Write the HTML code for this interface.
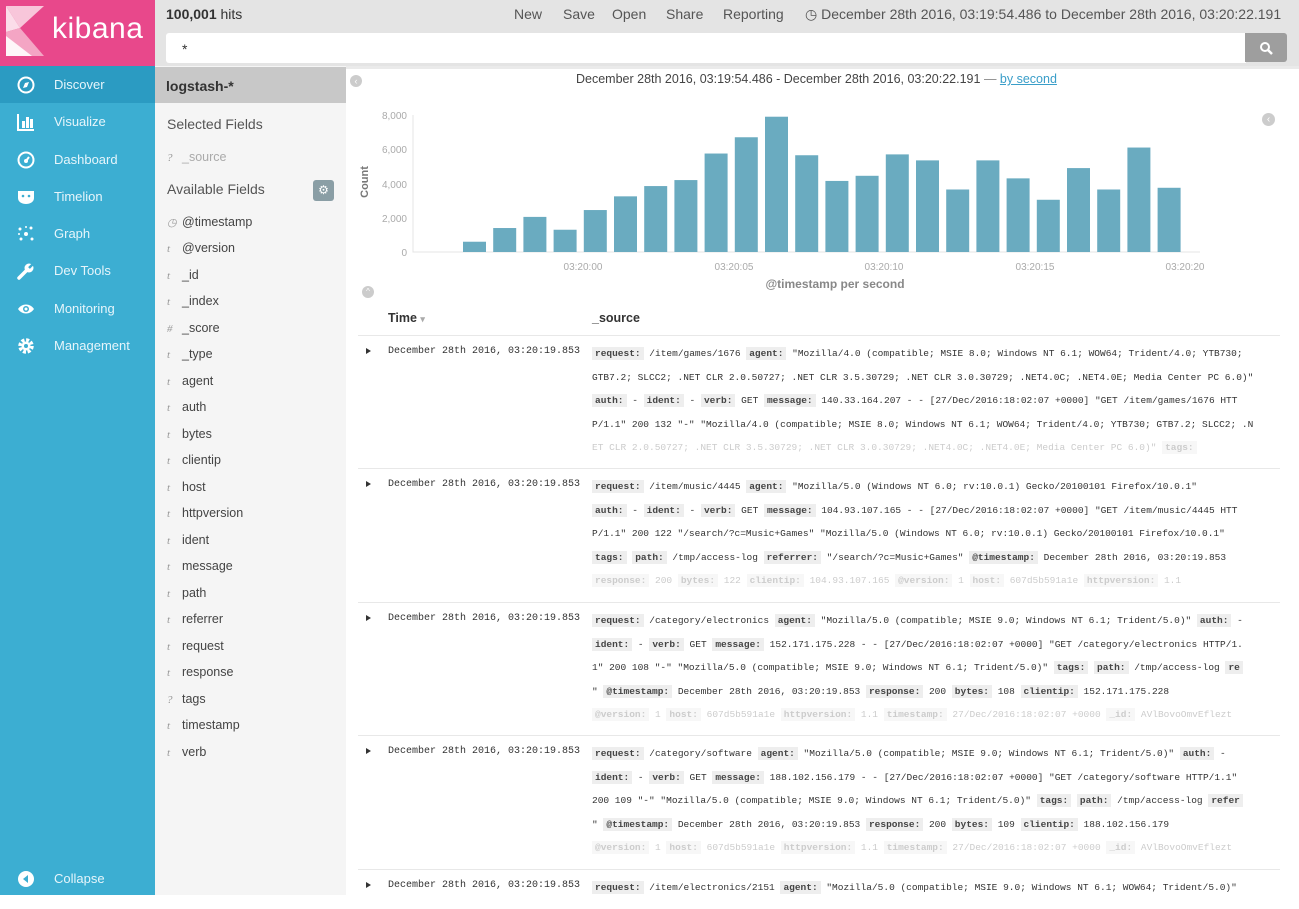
<!DOCTYPE html>
<html><head><meta charset="utf-8"><style>
*{margin:0;padding:0;box-sizing:border-box}
body{width:1299px;height:895px;overflow:hidden;background:#fff;font-family:"Liberation Sans",sans-serif;position:relative;color:#333}
.abs{position:absolute}
#side{left:0;top:0;width:155px;height:895px;background:#3caed2}
#logo{left:0;top:0;width:155px;height:66px;background:#e8488b}
.nav{position:absolute;left:0;width:155px;height:37px;color:#e6f5fb;font-size:13px;line-height:37px;padding-left:54px}
.nav svg{position:absolute;left:17px;top:10px}
#top{left:155px;top:0;width:1144px;height:66px;background:#e4e4e4}
#fields{left:155px;top:66px;width:191px;height:829px;background:#f5f5f5}
.f{position:absolute;left:12px;font-size:12.5px;color:#444}
.f i{font-family:"Liberation Serif",serif;color:#999;font-size:11px;display:inline-block;width:15px}
.row{position:absolute;left:358px;width:922px;border-top:1px solid #e8e8e8}
.ts{position:absolute;left:30px;top:10px;font:10px "Liberation Mono",monospace;color:#333}
.src{position:absolute;left:234px;top:6px;font:9.5px "Liberation Mono",monospace;color:#333;line-height:23.5px;white-space:nowrap}
.src b{background:#eee;padding:1px 3px;font-weight:bold;color:#444}
.src .fade{color:#ccc}
.src .fade b{color:#ccc;background:#f7f7f7}
.arr{position:absolute;left:8px;top:12px;width:0;height:0;border-left:5px solid #333;border-top:3px solid transparent;border-bottom:3px solid transparent}
</style></head><body>
<div id="side" class="abs"></div>
<div id="logo" class="abs">
<svg class="abs" style="left:6px;top:6px" width="40" height="50" viewBox="0 0 40 50"><polygon points="0,0 38,0 14,22" fill="#f8c6da"/><polygon points="0,0 14,22 0,26" fill="#fbdde9"/><polygon points="0,26 14,22 38,50 0,50" fill="#f4a5c4"/><polygon points="0,30 26,50 0,50" fill="#fff" opacity=".9"/></svg>
<div class="abs" style="left:52px;top:12px;font-size:30px;color:#fff;letter-spacing:.5px">kibana</div>
</div>
<div class="nav" style="top:66px;background:#2b9bc2"><svg width="18" height="18" viewBox="0 0 18 18"><circle cx="9" cy="9" r="7.5" fill="none" stroke="#fff" stroke-width="2"/><path d="M6 12l2-5 4-1-2 5z" fill="#fff"/></svg>Discover</div>
<div class="nav" style="top:103px"><svg width="18" height="18" viewBox="0 0 18 18"><path d="M1 1v16h16" fill="none" stroke="#fff" stroke-width="2"/><rect x="5" y="8" width="3" height="7" fill="#fff"/><rect x="9" y="4" width="3" height="11" fill="#fff"/><rect x="13" y="6" width="3" height="9" fill="#fff"/></svg>Visualize</div>
<div class="nav" style="top:141px"><svg width="18" height="18" viewBox="0 0 18 18"><circle cx="9" cy="9" r="7.5" fill="none" stroke="#fff" stroke-width="2"/><circle cx="9" cy="10" r="2" fill="#fff"/><path d="M9 10l3-4" stroke="#fff" stroke-width="2"/></svg>Dashboard</div>
<div class="nav" style="top:178px"><svg width="18" height="18" viewBox="0 0 18 18"><path d="M1 3h16v7c0 4-4 6-8 6s-8-2-8-6z" fill="#fff"/><circle cx="6" cy="8" r="1.3" fill="#3caed2"/><circle cx="12" cy="8" r="1.3" fill="#3caed2"/></svg>Timelion</div>
<div class="nav" style="top:215px"><svg width="18" height="18" viewBox="0 0 18 18" fill="#fff"><circle cx="9" cy="9" r="2"/><circle cx="3" cy="4" r="1.5"/><circle cx="14" cy="3" r="1.5"/><circle cx="4" cy="14" r="1.5"/><circle cx="15" cy="14" r="1.5"/><circle cx="9" cy="2" r="1"/><circle cx="2" cy="9" r="1"/></svg>Graph</div>
<div class="nav" style="top:252px"><svg width="18" height="18" viewBox="0 0 18 18"><path d="M2 16l8-8" stroke="#fff" stroke-width="3.5" stroke-linecap="round"/><circle cx="12" cy="6" r="4.5" fill="#fff"/><path d="M12 6l4-4" stroke="#3caed2" stroke-width="2.5"/></svg>Dev Tools</div>
<div class="nav" style="top:290px"><svg width="18" height="18" viewBox="0 0 18 18"><path d="M1 9c4-6 12-6 16 0c-4 6-12 6-16 0z" fill="#fff"/><circle cx="9" cy="9" r="3" fill="#3caed2"/><circle cx="9" cy="9" r="1.5" fill="#fff"/></svg>Monitoring</div>
<div class="nav" style="top:327px"><svg width="18" height="18" viewBox="0 0 18 18"><circle cx="9" cy="9" r="6" fill="none" stroke="#fff" stroke-width="3.5" stroke-dasharray="3 1.7"/><circle cx="9" cy="9" r="4.5" fill="#fff"/><circle cx="9" cy="9" r="2" fill="#3caed2"/></svg>Management</div>
<div class="nav" style="top:860px"><svg width="18" height="18" viewBox="0 0 18 18"><circle cx="9" cy="9" r="8" fill="#fff"/><path d="M11 5l-5 4 5 4z" fill="#3caed2"/></svg>Collapse</div>

<div id="top" class="abs">
<div class="abs" style="left:11px;top:6px;font-size:14px;color:#333"><b>100,001</b> hits</div>
<div class="abs" style="left:359px;top:6px;font-size:14px;color:#555">New</div>
<div class="abs" style="left:408px;top:6px;font-size:14px;color:#555">Save</div>
<div class="abs" style="left:457px;top:6px;font-size:14px;color:#555">Open</div>
<div class="abs" style="left:511px;top:6px;font-size:14px;color:#555">Share</div>
<div class="abs" style="left:568px;top:6px;font-size:14px;color:#555">Reporting</div>
<div class="abs" style="left:650px;top:6px;font-size:14px;color:#555;white-space:nowrap">◷ December 28th 2016, 03:19:54.486 to December 28th 2016, 03:20:22.191</div>
<div class="abs" style="left:11px;top:33px;width:1080px;height:30px;background:#fff;border-radius:3px 0 0 3px;font-size:14px;padding:8px 16px">*</div>
<div class="abs" style="left:1090px;top:33px;width:42px;height:29px;background:#9e9e9e;border-radius:0 3px 3px 0"><svg class="abs" style="left:14px;top:8px" width="14" height="14" viewBox="0 0 14 14"><circle cx="6" cy="6" r="4" fill="none" stroke="#fff" stroke-width="2"/><path d="M9 9l4 4" stroke="#fff" stroke-width="2.5"/></svg></div>
</div>

<div id="fields" class="abs">
<div class="abs" style="left:0;top:1px;width:191px;height:36px;background:#c8c8c8;font-weight:bold;font-size:14px;padding:11px 11px;color:#333">logstash-*</div>
<div class="f" style="top:50px;font-size:14px;color:#555">Selected Fields</div>
<div class="f" style="top:84px;color:#aaa"><i>?</i>_source</div>
<div class="f" style="top:115px;font-size:14px;color:#555">Available Fields</div>
<div class="abs" style="left:158px;top:114px;width:21px;height:21px;background:#8a9ea5;border-radius:3px;color:#fff;font-size:12px;text-align:center;line-height:21px">⚙</div>
<div class="f" style="top:149px"><i>◷</i>@timestamp</div>
<div class="f" style="top:175px"><i>t</i>@version</div>
<div class="f" style="top:202px"><i>t</i>_id</div>
<div class="f" style="top:228px"><i>t</i>_index</div>
<div class="f" style="top:255px"><i>#</i>_score</div>
<div class="f" style="top:281px"><i>t</i>_type</div>
<div class="f" style="top:308px"><i>t</i>agent</div>
<div class="f" style="top:334px"><i>t</i>auth</div>
<div class="f" style="top:361px"><i>t</i>bytes</div>
<div class="f" style="top:387px"><i>t</i>clientip</div>
<div class="f" style="top:414px"><i>t</i>host</div>
<div class="f" style="top:440px"><i>t</i>httpversion</div>
<div class="f" style="top:467px"><i>t</i>ident</div>
<div class="f" style="top:493px"><i>t</i>message</div>
<div class="f" style="top:520px"><i>t</i>path</div>
<div class="f" style="top:546px"><i>t</i>referrer</div>
<div class="f" style="top:573px"><i>t</i>request</div>
<div class="f" style="top:599px"><i>t</i>response</div>
<div class="f" style="top:626px"><i>?</i>tags</div>
<div class="f" style="top:652px"><i>t</i>timestamp</div>
<div class="f" style="top:679px"><i>t</i>verb</div>
</div>
<div class="abs" style="left:346px;top:66px;width:953px;height:3px;background:#eaeaea"></div>

<div class="abs" style="left:576px;top:72px;font-size:12.5px;color:#444;white-space:nowrap">December 28th 2016, 03:19:54.486 - December 28th 2016, 03:20:22.191 <span style="color:#888">—</span> <span style="color:#3a9ec9;text-decoration:underline">by second</span></div>
<div class="abs" style="left:350px;top:75px;width:12px;height:12px;border-radius:50%;background:#ccc;color:#fff;font-size:9px;line-height:12px;text-align:center">‹</div>
<div class="abs" style="left:1262px;top:113px;width:13px;height:13px;border-radius:50%;background:#ccc;color:#fff;font-size:10px;line-height:13px;text-align:center">‹</div>
<div class="abs" style="left:362px;top:286px;width:12px;height:12px;border-radius:50%;background:#ccc;color:#fff;font-size:8px;line-height:12px;text-align:center">^</div>

<svg class="abs" style="left:346px;top:100px" width="953" height="200" viewBox="346 100 953 200">
<g font-family="Liberation Sans" font-size="10" fill="#aaa" text-anchor="end">
<text x="407" y="119">8,000</text><text x="407" y="153">6,000</text><text x="407" y="188">4,000</text><text x="407" y="222">2,000</text><text x="407" y="256">0</text>
</g>
<text transform="translate(368,182) rotate(-90)" font-family="Liberation Sans" font-size="11" font-weight="bold" fill="#777" text-anchor="middle">Count</text>
<path d="M413 115V252H1200" stroke="#e4e4e4" fill="none"/>
<g fill="#6aabc0" id="bars"></g>
<g font-family="Liberation Sans" font-size="10" fill="#aaa" text-anchor="middle">
<text x="583" y="270">03:20:00</text><text x="734" y="270">03:20:05</text><text x="884" y="270">03:20:10</text><text x="1035" y="270">03:20:15</text><text x="1185" y="270">03:20:20</text>
</g>
<text x="835" y="288" font-family="Liberation Sans" font-size="12" font-weight="bold" fill="#888" text-anchor="middle">@timestamp per second</text>
</svg>

<div class="abs" style="left:388px;top:311px;font-size:12.5px;font-weight:bold;color:#333">Time <span style="color:#aaa;font-size:9px">▾</span></div>
<div class="abs" style="left:592px;top:311px;font-size:12.5px;font-weight:bold;color:#333">_source</div>

<div class="row" style="top:335px;height:134px"><div class="arr"></div><div class="ts">December 28th 2016, 03:20:19.853</div>
<div class="src"><b>request:</b> /item/games/1676 <b>agent:</b> "Mozilla/4.0 (compatible; MSIE 8.0; Windows NT 6.1; WOW64; Trident/4.0; YTB730;<br>GTB7.2; SLCC2; .NET CLR 2.0.50727; .NET CLR 3.5.30729; .NET CLR 3.0.30729; .NET4.0C; .NET4.0E; Media Center PC 6.0)"<br><b>auth:</b> - <b>ident:</b> - <b>verb:</b> GET <b>message:</b> 140.33.164.207 - - [27/Dec/2016:18:02:07 +0000] "GET /item/games/1676 HTT<br>P/1.1" 200 132 "-" "Mozilla/4.0 (compatible; MSIE 8.0; Windows NT 6.1; WOW64; Trident/4.0; YTB730; GTB7.2; SLCC2; .N<br><span class="fade">ET CLR 2.0.50727; .NET CLR 3.5.30729; .NET CLR 3.0.30729; .NET4.0C; .NET4.0E; Media Center PC 6.0)" <b>tags:</b></span></div></div>

<div class="row" style="top:468px;height:134px"><div class="arr"></div><div class="ts">December 28th 2016, 03:20:19.853</div>
<div class="src"><b>request:</b> /item/music/4445 <b>agent:</b> "Mozilla/5.0 (Windows NT 6.0; rv:10.0.1) Gecko/20100101 Firefox/10.0.1"<br><b>auth:</b> - <b>ident:</b> - <b>verb:</b> GET <b>message:</b> 104.93.107.165 - - [27/Dec/2016:18:02:07 +0000] "GET /item/music/4445 HTT<br>P/1.1" 200 122 "/search/?c=Music+Games" "Mozilla/5.0 (Windows NT 6.0; rv:10.0.1) Gecko/20100101 Firefox/10.0.1"<br><b>tags:</b>  <b>path:</b> /tmp/access-log <b>referrer:</b> "/search/?c=Music+Games" <b>@timestamp:</b> December 28th 2016, 03:20:19.853<br><span class="fade"><b>response:</b> 200 <b>bytes:</b> 122 <b>clientip:</b> 104.93.107.165 <b>@version:</b> 1 <b>host:</b> 607d5b591a1e <b>httpversion:</b> 1.1</span></div></div>

<div class="row" style="top:602px;height:134px"><div class="arr"></div><div class="ts">December 28th 2016, 03:20:19.853</div>
<div class="src"><b>request:</b> /category/electronics <b>agent:</b> "Mozilla/5.0 (compatible; MSIE 9.0; Windows NT 6.1; Trident/5.0)" <b>auth:</b> -<br><b>ident:</b> - <b>verb:</b> GET <b>message:</b> 152.171.175.228 - - [27/Dec/2016:18:02:07 +0000] "GET /category/electronics HTTP/1.<br>1" 200 108 "-" "Mozilla/5.0 (compatible; MSIE 9.0; Windows NT 6.1; Trident/5.0)" <b>tags:</b>  <b>path:</b> /tmp/access-log <b>re</b><br>" <b>@timestamp:</b> December 28th 2016, 03:20:19.853 <b>response:</b> 200 <b>bytes:</b> 108 <b>clientip:</b> 152.171.175.228<br><span class="fade"><b>@version:</b> 1 <b>host:</b> 607d5b591a1e <b>httpversion:</b> 1.1 <b>timestamp:</b> 27/Dec/2016:18:02:07 +0000 <b>_id:</b> AVlBovoOmvEflezt</span></div></div>

<div class="row" style="top:735px;height:134px"><div class="arr"></div><div class="ts">December 28th 2016, 03:20:19.853</div>
<div class="src"><b>request:</b> /category/software <b>agent:</b> "Mozilla/5.0 (compatible; MSIE 9.0; Windows NT 6.1; Trident/5.0)" <b>auth:</b> -<br><b>ident:</b> - <b>verb:</b> GET <b>message:</b> 188.102.156.179 - - [27/Dec/2016:18:02:07 +0000] "GET /category/software HTTP/1.1"<br>200 109 "-" "Mozilla/5.0 (compatible; MSIE 9.0; Windows NT 6.1; Trident/5.0)" <b>tags:</b>  <b>path:</b> /tmp/access-log <b>refer</b><br>" <b>@timestamp:</b> December 28th 2016, 03:20:19.853 <b>response:</b> 200 <b>bytes:</b> 109 <b>clientip:</b> 188.102.156.179<br><span class="fade"><b>@version:</b> 1 <b>host:</b> 607d5b591a1e <b>httpversion:</b> 1.1 <b>timestamp:</b> 27/Dec/2016:18:02:07 +0000 <b>_id:</b> AVlBovoOmvEflezt</span></div></div>

<div class="row" style="top:869px;height:40px"><div class="arr"></div><div class="ts">December 28th 2016, 03:20:19.853</div>
<div class="src"><b>request:</b> /item/electronics/2151 <b>agent:</b> "Mozilla/5.0 (compatible; MSIE 9.0; Windows NT 6.1; WOW64; Trident/5.0)"</div></div>

<script>
var h=[600,1400,2050,1300,2450,3250,3850,4200,5750,6700,7900,5650,4150,4450,5700,5350,3650,5350,4300,3050,4900,3650,6100,3750];
var g=document.getElementById('bars'),s='';
for(var i=0;i<h.length;i++){var hh=h[i]/8000*137;s+='<rect x="'+(463+i*30.2)+'" y="'+(252-hh)+'" width="23" height="'+hh+'"/>';}
g.innerHTML=s;
</script>
</body></html>
